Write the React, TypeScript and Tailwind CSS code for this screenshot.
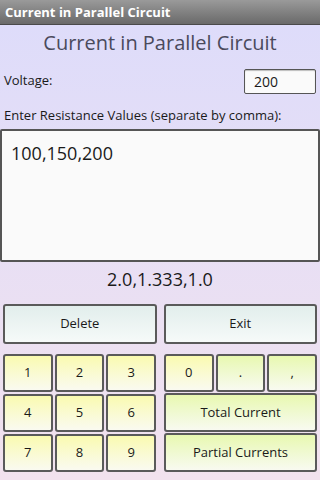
import React from "react";

const font = { fontFamily: '"Open Sans", "Noto Sans", sans-serif' };

function Key({ label, className = "" }: { label: string; className?: string }) {
  return (
    <button
      className={
        "flex items-center justify-center rounded-[3px] border-2 border-[#5a5a5a] text-[13px] text-[#1a1a1a] " +
        className
      }
    >
      {label}
    </button>
  );
}

export default function App() {
  const yellow = "bg-gradient-to-b from-[#fafab0] to-[#fafaf0]";
  const green = "bg-gradient-to-b from-[#e8f8b0] to-[#f8faf0]";
  return (
    <div className="w-[320px] h-[480px] flex flex-col overflow-hidden" style={font}>
      {/* title bar */}
      <div className="h-[25px] flex items-center px-[5px] bg-gradient-to-b from-[#9a9a9a] to-[#6a6a6a] border-b border-[#4a4a4a]">
        <span className="text-white font-bold text-[13px] leading-none">Current in Parallel Circuit</span>
      </div>

      <div className="flex-1 flex flex-col bg-gradient-to-b from-[#dedcfa] to-[#f2e2ee]">
        <div className="h-[35px] flex items-center justify-center text-[20px] text-[#4a4a5c]">
          Current in Parallel Circuit
        </div>

        <div className="flex items-center justify-between h-[42px] pl-[4px] pr-[4px]">
          <span className="text-[13px] text-[#1a1a1a]">Voltage:</span>
          <div className="w-[72px] h-[25px] bg-[#fafafa] border border-[#555] rounded-[2px] flex items-center pl-[9px] text-[14px] text-[#1a1a1a] shadow-[inset_0_1px_1px_rgba(0,0,0,0.25)]">
            200
          </div>
        </div>

        <div className="h-[27px] flex items-center pl-[4px] text-[13px] text-[#1a1a1a]">
          Enter Resistance Values (separate by comma):
        </div>

        <div className="h-[133px] bg-[#fafafa] border-2 border-[#555] rounded-[2px] px-[9px] pt-[11px] text-[18px] text-[#1a1a1a] leading-tight">
          100,150,200
        </div>

        <div className="h-[34px] flex items-center justify-center text-[18px] text-[#1a1a1a]">
          2.0,1.333,1.0
        </div>

        <div className="flex gap-[7px] px-[3px] pt-[8px] h-[48px]">
          <Key label="Delete" className="flex-1 bg-gradient-to-b from-[#e2eeec] to-[#f6faf9]" />
          <Key label="Exit" className="flex-1 bg-gradient-to-b from-[#e2eeec] to-[#f6faf9]" />
        </div>

        <div className="flex gap-[8px] px-[3px] pt-[10px]">
          <div className="grid grid-cols-3 gap-[2px] w-[153px]">
            {["1", "2", "3", "4", "5", "6", "7", "8", "9"].map((k) => (
              <Key key={k} label={k} className={"h-[38px] " + yellow} />
            ))}
          </div>
          <div className="flex flex-col gap-[1px] w-[153px]">
            <div className="grid grid-cols-3 gap-[2px]">
              <Key label="0" className={"h-[38px] " + yellow} />
              <Key label="." className={"h-[38px] " + green} />
              <Key label="," className={"h-[38px] " + green} />
            </div>
            <Key label="Total Current" className={"h-[39px] " + green} />
            <Key label="Partial Currents" className={"h-[39px] " + green} />
          </div>
        </div>
      </div>
    </div>
  );
}
